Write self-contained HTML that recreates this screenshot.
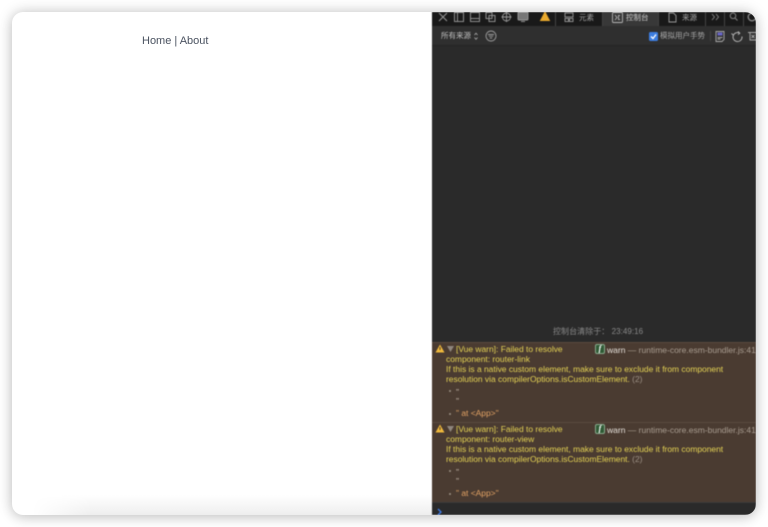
<!DOCTYPE html>
<html><head><meta charset="utf-8">
<style>
*{margin:0;padding:0;box-sizing:border-box}
html,body{width:768px;height:527px;background:#fff;overflow:hidden}
body{position:relative;font-family:"Liberation Sans","Noto Sans CJK SC",sans-serif}
#win{position:absolute;left:12px;top:12px;width:744px;height:503px;border-radius:11px;background:#fff;box-shadow:0 0 14px rgba(0,0,0,.22),0 4px 12px rgba(0,0,0,.08);overflow:hidden}
#fade{position:absolute;left:20px;top:483px;width:400px;height:20px;background:linear-gradient(#fff,#eeeeee);-webkit-mask-image:linear-gradient(90deg,transparent,#000 60px);mask-image:linear-gradient(90deg,transparent,#000 60px)}
#nav{position:absolute;left:130px;top:22px;font-size:11px;line-height:14px;color:#4a5260;white-space:nowrap;filter:blur(.3px)}
#dt{position:absolute;left:420px;top:0;width:324px;height:503px;background:#2a2a2a;overflow:hidden;filter:blur(.4px)}
.a{position:absolute;white-space:nowrap}
#bar1{position:absolute;left:0;top:0;width:324px;height:14px;background:#191919}
#bar2{position:absolute;left:0;top:14px;width:324px;height:20px;background:#2f2f2f;border-bottom:1px solid #242424}
.tab{font-size:7.5px;line-height:12px;color:#a8a8a8}
.v{position:absolute;width:1px;background:#444}
.w{position:absolute;left:0;width:324px;background:#4a3b31;border-top:1px solid #5a4a3e}
.y{position:absolute;left:14px;font-size:8.45px;line-height:10px;color:#e4d254;white-space:nowrap}
.o{position:absolute;left:24px;font-size:8.45px;line-height:10px;color:#e2a264;white-space:nowrap}
.g{color:#9c9085}
.d{position:absolute;left:17px;width:2px;height:2px;border-radius:1px;background:#9c9085}
.r{position:absolute;left:175px;top:2px;font-size:8.5px;line-height:10px;color:#a89c90;white-space:nowrap}
.r b{font-weight:normal;color:#e5e0da}
.f{position:absolute;left:163px;top:1px;width:10px;height:10px;border-radius:2px;background:#2f5a35;border:1px solid #8aa98d;color:#fff;font:italic bold 8px/8px "Liberation Serif",serif;text-align:center}
svg{position:absolute;overflow:visible}
</style></head>
<body>
<div id="win">
<div id="fade"></div>
<div id="nav">Home | About</div>
<div id="dt">
<div id="bar1"></div>
<div id="bar2"></div>
<div class="a" style="left:171px;top:0;width:55px;height:14px;background:#383838"></div>
<svg style="left:0;top:0" width="324" height="34" fill="none" stroke="#9a9a9a" stroke-width=".9">
<path d="M7 1 L15 9 M15 1 L7 9"/>
<rect x="22.500" y="0.500" width="9" height="9"/><path d="M25.500 .5V9.500"/>
<rect x="38.500" y="0.500" width="9" height="9"/><path d="M38.500 6.500H47.500"/>
<rect x="54" y="0.500" width="6" height="6"/><rect x="57" y="3.500" width="6" height="6"/>
<circle cx="74.500" cy="5" r="4"/><path d="M74.500 0V10M69.500 5H79.500"/>
<rect x="86" y="0" width="10" height="8" rx="1" fill="#777" stroke="#999"/><path d="M89 9.500H93"/>
<path d="M113 0 L117.500 8.500 H108.500 Z" fill="#e9a92d" stroke="#e9a92d"/>
<rect x="133" y="1" width="8" height="4"/><rect x="133" y="6.500" width="3.500" height="3"/><rect x="137.500" y="6.500" width="3.500" height="3"/>
<rect x="180.500" y="0.500" width="10" height="10" rx="1" stroke="#b5b5b5"/><path d="M183 3l2 2.500-2 2.500M188 3.500h-1.500v4h1.500" stroke="#b5b5b5"/>
<path d="M237 1h4.500l2.500 2.500V10H237Z"/>
<path d="M280 2l2.500 3-2.500 3M284 2l2.500 3-2.500 3" stroke="#888"/>
<circle cx="301" cy="3.800" r="2.800" stroke="#888"/><path d="M303 6l2.500 2.500" stroke="#888"/>
<circle cx="320" cy="5" r="3.800" stroke-width="1.400" stroke="#888"/>
<circle cx="59" cy="24" r="5"/><path d="M56 22.500h6M56.800 24.200h4.400M57.800 26h2.400"/>
<path d="M42.500 23l1.500-1.800 1.500 1.800M42.500 25.500l1.500 1.800 1.500-1.800" stroke="#bbb" stroke-width=".7"/>
<path d="M284 19.500h8v8l-2 2h-6Z" stroke="#aaa"/><rect x="285.500" y="20.500" width="5" height="3" fill="#6a67c9" stroke="none"/><path d="M285.500 25.500h5M285.500 27h3" stroke="#aaa"/>
<path d="M307.500 21a4.500 4.500 0 1 0 2.500 3.500M299.500 21.500l1.800 1.700M306 19.500l1.800 1.700-1.800 1.500" stroke="#bbb"/>
<path d="M316 20.500h8M318 20.500v7.500h6M319.500 23l3 3M322.500 23l-3 3" stroke="#aaa"/>
</svg>
<div class="v" style="left:123px;top:0;height:14px"></div>
<div class="v" style="left:170px;top:0;height:14px"></div>
<div class="v" style="left:226px;top:0;height:14px"></div>
<div class="v" style="left:273px;top:0;height:14px"></div>
<div class="v" style="left:292px;top:0;height:14px"></div>
<div class="v" style="left:311px;top:0;height:14px"></div>
<div class="v" style="left:278px;top:19px;height:10px"></div>
<div class="a tab" style="left:147px;top:0">元素</div>
<div class="a tab" style="left:194px;top:0;color:#d0d0d0">控制台</div>
<div class="a tab" style="left:250px;top:0">来源</div>
<div class="a tab" style="left:9px;top:18px;color:#c0c0c0">所有来源</div>
<div class="a" style="left:217px;top:20px;width:9px;height:9px;border-radius:1.500px;background:#3c7de0"></div>
<svg style="left:217px;top:20px" width="9" height="9" fill="none" stroke="#fff" stroke-width="1.300"><path d="M2 4.500l2 2 3-4"/></svg>
<div class="a tab" style="left:228px;top:18px;color:#a8a8a8">模拟用户手势</div>
<div class="a" style="left:121px;top:315px;font-size:8px;line-height:10px;color:#8a8a8a;letter-spacing:.05px">控制台清除于： 23:49:16</div>

<div class="w" style="top:330px;height:80px">
<svg style="left:3px;top:1px" width="10" height="9"><path d="M5 0.500L9.500 8.500H.5Z" fill="#f0b93c"/><path d="M5 3v3" stroke="#4a3b31"/></svg>
<svg style="left:15px;top:3px" width="7" height="6"><path d="M0 0H7L3.500 6Z" fill="#8f867d"/></svg>
<div class="y" style="left:24px;top:1px">[Vue warn]: Failed to resolve</div>
<div class="y" style="top:11px">component: router-link</div>
<div class="y" style="top:21px">If this is a native custom element, make sure to exclude it from component</div>
<div class="y" style="top:31px">resolution via compilerOptions.isCustomElement. <span class="g">(2)</span></div>
<div class="f">f</div><div class="r"><b>warn</b> — runtime-core.esm-bundler.js:41</div>
<div class="d" style="top:47px"></div><div class="o" style="top:44px;color:#c9bcae">"</div><div class="o" style="top:53px;color:#c9bcae">"</div>
<div class="d" style="top:70px"></div><div class="o" style="top:65px">" at &lt;App&gt;"</div>
</div>
<div class="w" style="top:410px;height:81px">
<svg style="left:3px;top:1px" width="10" height="9"><path d="M5 0.500L9.500 8.500H.5Z" fill="#f0b93c"/><path d="M5 3v3" stroke="#4a3b31"/></svg>
<svg style="left:15px;top:3px" width="7" height="6"><path d="M0 0H7L3.500 6Z" fill="#8f867d"/></svg>
<div class="y" style="left:24px;top:1px">[Vue warn]: Failed to resolve</div>
<div class="y" style="top:11px">component: router-view</div>
<div class="y" style="top:21px">If this is a native custom element, make sure to exclude it from component</div>
<div class="y" style="top:31px">resolution via compilerOptions.isCustomElement. <span class="g">(2)</span></div>
<div class="f">f</div><div class="r"><b>warn</b> — runtime-core.esm-bundler.js:41</div>
<div class="d" style="top:47px"></div><div class="o" style="top:44px;color:#c9bcae">"</div><div class="o" style="top:53px;color:#c9bcae">"</div>
<div class="d" style="top:70px"></div><div class="o" style="top:65px">" at &lt;App&gt;"</div>
</div>
<div class="a" style="left:0;top:490px;width:324px;height:13px;background:#2a2a2a;border-top:1px solid #3a3a3a"></div>
<svg style="left:5px;top:497px" width="6" height="6" fill="none" stroke="#3f7fee" stroke-width="1.300"><path d="M1 0l3 3-3 3"/></svg>
</div>
</div>
</body></html>
